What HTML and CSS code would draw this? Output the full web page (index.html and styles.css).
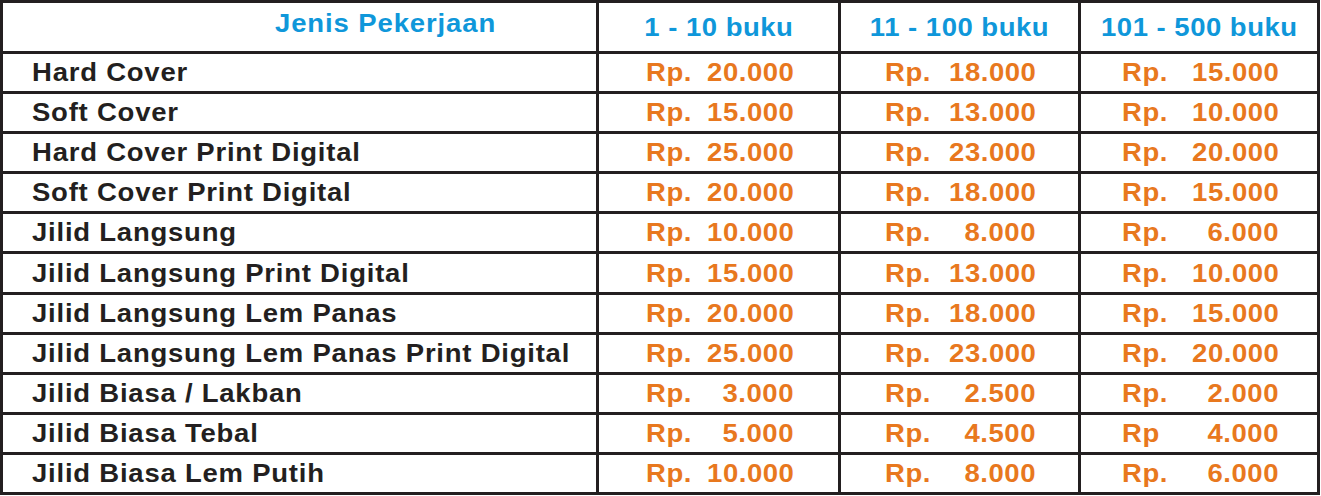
FILE: index.html
```html
<!DOCTYPE html>
<html lang="id">
<head>
<meta charset="utf-8">
<title>Harga Jilid</title>
<link rel="stylesheet" href="styles.css">
</head>
<body>
<div class="table">
  <div class="cell head head-name"><span class="t">Jenis Pekerjaan</span></div>
  <div class="cell head"><span class="t">1 - 10 buku</span></div>
  <div class="cell head"><span class="t">11 - 100 buku</span></div>
  <div class="cell head"><span class="t">101 - 500 buku</span></div>

  <div class="cell name"><span class="t">Hard Cover</span></div>
  <div class="cell price c1"><span class="t rp">Rp.</span><span class="t num">20.000</span></div>
  <div class="cell price c2"><span class="t rp">Rp.</span><span class="t num">18.000</span></div>
  <div class="cell price c3"><span class="t rp">Rp.</span><span class="t num">15.000</span></div>

  <div class="cell name"><span class="t">Soft Cover</span></div>
  <div class="cell price c1"><span class="t rp">Rp.</span><span class="t num">15.000</span></div>
  <div class="cell price c2"><span class="t rp">Rp.</span><span class="t num">13.000</span></div>
  <div class="cell price c3"><span class="t rp">Rp.</span><span class="t num">10.000</span></div>

  <div class="cell name"><span class="t">Hard Cover Print Digital</span></div>
  <div class="cell price c1"><span class="t rp">Rp.</span><span class="t num">25.000</span></div>
  <div class="cell price c2"><span class="t rp">Rp.</span><span class="t num">23.000</span></div>
  <div class="cell price c3"><span class="t rp">Rp.</span><span class="t num">20.000</span></div>

  <div class="cell name"><span class="t">Soft Cover Print Digital</span></div>
  <div class="cell price c1"><span class="t rp">Rp.</span><span class="t num">20.000</span></div>
  <div class="cell price c2"><span class="t rp">Rp.</span><span class="t num">18.000</span></div>
  <div class="cell price c3"><span class="t rp">Rp.</span><span class="t num">15.000</span></div>

  <div class="cell name"><span class="t">Jilid Langsung</span></div>
  <div class="cell price c1"><span class="t rp">Rp.</span><span class="t num">10.000</span></div>
  <div class="cell price c2"><span class="t rp">Rp.</span><span class="t num">8.000</span></div>
  <div class="cell price c3"><span class="t rp">Rp.</span><span class="t num">6.000</span></div>

  <div class="cell name"><span class="t">Jilid Langsung Print Digital</span></div>
  <div class="cell price c1"><span class="t rp">Rp.</span><span class="t num">15.000</span></div>
  <div class="cell price c2"><span class="t rp">Rp.</span><span class="t num">13.000</span></div>
  <div class="cell price c3"><span class="t rp">Rp.</span><span class="t num">10.000</span></div>

  <div class="cell name"><span class="t">Jilid Langsung Lem Panas</span></div>
  <div class="cell price c1"><span class="t rp">Rp.</span><span class="t num">20.000</span></div>
  <div class="cell price c2"><span class="t rp">Rp.</span><span class="t num">18.000</span></div>
  <div class="cell price c3"><span class="t rp">Rp.</span><span class="t num">15.000</span></div>

  <div class="cell name"><span class="t">Jilid Langsung Lem Panas Print Digital</span></div>
  <div class="cell price c1"><span class="t rp">Rp.</span><span class="t num">25.000</span></div>
  <div class="cell price c2"><span class="t rp">Rp.</span><span class="t num">23.000</span></div>
  <div class="cell price c3"><span class="t rp">Rp.</span><span class="t num">20.000</span></div>

  <div class="cell name"><span class="t">Jilid Biasa / Lakban</span></div>
  <div class="cell price c1"><span class="t rp">Rp.</span><span class="t num">3.000</span></div>
  <div class="cell price c2"><span class="t rp">Rp.</span><span class="t num">2.500</span></div>
  <div class="cell price c3"><span class="t rp">Rp.</span><span class="t num">2.000</span></div>

  <div class="cell name"><span class="t">Jilid Biasa Tebal</span></div>
  <div class="cell price c1"><span class="t rp">Rp.</span><span class="t num">5.000</span></div>
  <div class="cell price c2"><span class="t rp">Rp.</span><span class="t num">4.500</span></div>
  <div class="cell price c3"><span class="t rp">Rp</span><span class="t num">4.000</span></div>

  <div class="cell name"><span class="t">Jilid Biasa Lem Putih</span></div>
  <div class="cell price c1"><span class="t rp">Rp.</span><span class="t num">10.000</span></div>
  <div class="cell price c2"><span class="t rp">Rp.</span><span class="t num">8.000</span></div>
  <div class="cell price c3"><span class="t rp">Rp.</span><span class="t num">6.000</span></div>
</div>
</body>
</html>
```

FILE: styles.css
```css
html, body {
  margin: 0;
  padding: 0;
  background: #ffffff;
}

body {
  font-family: "Liberation Sans", Arial, sans-serif;
  font-weight: bold;
  font-size: 25px;
}

.table {
  display: grid;
  width: 1320px;
  box-sizing: border-box;
  grid-template-columns: 593px 239px 237px 236px;
  grid-template-rows: 48px repeat(11, 37.1px);
  gap: 3px;
  padding: 3px;
  background: #231f20;
}

.cell {
  background: #ffffff;
  display: flex;
  align-items: center;
  white-space: nowrap;
}

.t {
  display: inline-block;
  transform: scaleX(1.1);
  transform-origin: left center;
  letter-spacing: 0.7px;
}

.head {
  justify-content: center;
  color: #0f97da;
  padding-top: 1px;
}

.head .t {
  transform-origin: center center;
  letter-spacing: 0.45px;
}

.head-name {
  justify-content: flex-start;
  padding-left: 272px;
  padding-top: 0;
  padding-bottom: 7px;
}

.head-name .t {
  transform-origin: left center;
  letter-spacing: 0.8px;
}

.name {
  color: #231f20;
  padding-left: 29px;
}

.price {
  color: #e8781e;
  justify-content: space-between;
}

.price .rp {
  letter-spacing: 0.5px;
}

.price .num {
  transform-origin: right center;
  letter-spacing: 0.5px;
  margin-right: -1px;
}

.c1 {
  padding-left: 47px;
  padding-right: 45px;
}

.c2 {
  padding-left: 44px;
  padding-right: 43px;
}

.c3 {
  padding-left: 41px;
  padding-right: 39px;
}
```
